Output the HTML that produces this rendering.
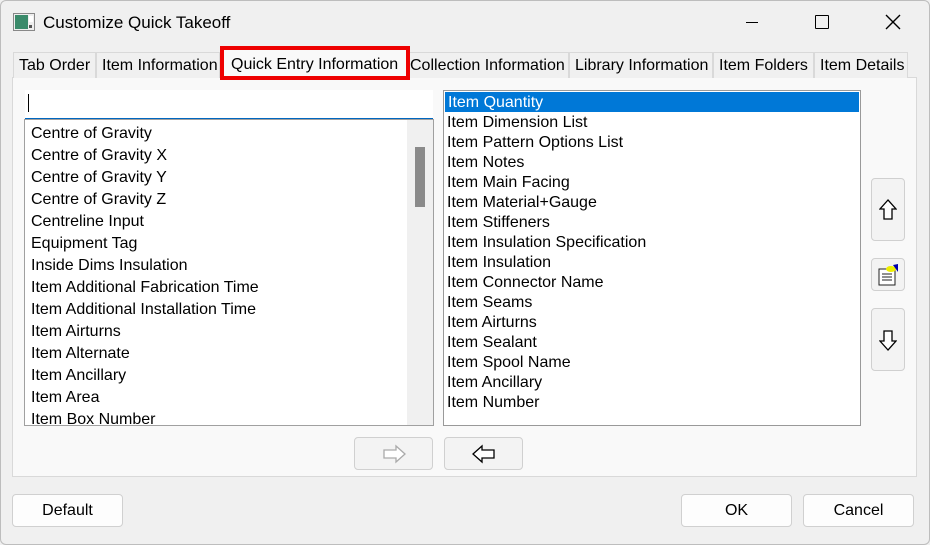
<!DOCTYPE html>
<html><head><style>
*{box-sizing:border-box;margin:0;padding:0}
body{width:930px;height:545px;background:#f0f0f0;font-family:"Liberation Sans",Arial,sans-serif;font-size:15px;color:#000;position:relative;overflow:hidden}
.a{position:absolute}
.tab{position:absolute;top:52px;height:26px;background:#f0f0f0;border:1px solid #d9d9d9;border-bottom:none;padding:4px 0 0 5px;font-size:16px;white-space:nowrap}
.btn{position:absolute;background:#fdfdfd;border:1px solid #d0d0d0;border-radius:4px;text-align:center;font-size:16px}
.row{height:22px;line-height:22px;padding-left:6px;white-space:nowrap;font-size:16px}
.r2{height:20px;line-height:20px;padding-left:3px;white-space:nowrap;font-size:16px}
</style></head><body>
<div class="a" style="left:0;top:0;width:930px;height:545px;border:1px solid #bdbdbd;border-radius:6px"></div>
<svg class="a" style="left:13px;top:13px" width="22" height="18"><rect x="0.5" y="0.5" width="21" height="17" fill="#eee" stroke="#888"/><rect x="2" y="2" width="13" height="14" fill="#3a8a6a"/><rect x="16" y="3" width="4" height="6" fill="#fff"/><rect x="16" y="12" width="3" height="3" fill="#555"/></svg>
<div class="a" style="left:43px;top:13px;font-size:17px">Customize Quick Takeoff</div>
<div class="a" style="left:746px;top:22px;width:12px;height:1px;background:#000"></div>
<div class="a" style="left:815px;top:15px;width:14px;height:14px;border:1.5px solid #000;border-radius:1px"></div>
<svg class="a" style="left:885px;top:14px" width="16" height="16"><path d="M1 1L15 15M15 1L1 15" stroke="#000" stroke-width="1.4"/></svg>
<div class="a" style="left:12px;top:77px;width:905px;height:400px;background:#f9f9f9;border:1px solid #d9d9d9"></div>
<div class="tab" style="left:13px;width:83px">Tab Order</div>
<div class="tab" style="left:96px;width:124px">Item Information</div>
<div class="tab" style="left:404px;width:165px">Collection Information</div>
<div class="tab" style="left:569px;width:144px">Library Information</div>
<div class="tab" style="left:713px;width:101px">Item Folders</div>
<div class="tab" style="left:814px;width:94px">Item Details</div>
<div class="a" style="left:220px;top:46px;width:190px;height:34px;border:4px solid #e00;background:#f9f9f9;padding:6px 0 0 7px;font-size:16px;white-space:nowrap">Quick Entry Information</div>
<div class="a" style="left:25px;top:90px;width:408px;height:30px;background:#fff;border-bottom:2px solid #0067c0"></div>
<div class="a" style="left:28px;top:94px;width:1px;height:18px;background:#000"></div>
<div class="a" style="left:24px;top:119px;width:410px;height:307px;background:#fff;border:1px solid #a0a0a0;overflow:hidden">
<div style="padding-top:3px">
<div class="row">Centre of Gravity</div><div class="row">Centre of Gravity X</div><div class="row">Centre of Gravity Y</div><div class="row">Centre of Gravity Z</div><div class="row">Centreline Input</div><div class="row">Equipment Tag</div><div class="row">Inside Dims Insulation</div><div class="row">Item Additional Fabrication Time</div><div class="row">Item Additional Installation Time</div><div class="row">Item Airturns</div><div class="row">Item Alternate</div><div class="row">Item Ancillary</div><div class="row">Item Area</div><div class="row">Item Box Number</div></div>
<div class="a" style="left:382px;top:0;width:26px;height:306px;background:#f0f0f0"></div>
<div class="a" style="left:390px;top:27px;width:10px;height:60px;background:#8a8a8a"></div>
</div>
<div class="a" style="left:443px;top:90px;width:418px;height:336px;background:#fff;border:1px solid #999">
<div class="r2" style="margin:1px 1px 0 1px;padding-top:1px;background:#0078d7;color:#fff">Item Quantity</div>
<div style="padding-top:1px">
<div class="r2">Item Dimension List</div><div class="r2">Item Pattern Options List</div><div class="r2">Item Notes</div><div class="r2">Item Main Facing</div><div class="r2">Item Material+Gauge</div><div class="r2">Item Stiffeners</div><div class="r2">Item Insulation Specification</div><div class="r2">Item Insulation</div><div class="r2">Item Connector Name</div><div class="r2">Item Seams</div><div class="r2">Item Airturns</div><div class="r2">Item Sealant</div><div class="r2">Item Spool Name</div><div class="r2">Item Ancillary</div><div class="r2">Item Number</div></div>
</div>
<div class="btn" style="left:871px;top:178px;width:34px;height:63px;background:#f3f3f3"><svg style="margin-top:20px" width="18" height="22"><path d="M9 1L1 10H5V20H13V10H17Z" fill="#fff" stroke="#000" stroke-width="1.3"/></svg></div>
<div class="btn" style="left:871px;top:258px;width:34px;height:33px;background:#f3f3f3"><svg style="margin-top:4px" width="24" height="24"><rect x="3" y="6" width="16" height="16" fill="#fff" stroke="#222"/><path d="M6 11h10M6 14h10M6 17h10" stroke="#222"/><ellipse cx="15" cy="6" rx="5" ry="3" fill="#ee0"/><path d="M17 2L22 1V9Z" fill="#00a"/></svg></div>
<div class="btn" style="left:871px;top:308px;width:34px;height:63px;background:#f3f3f3"><svg style="margin-top:20px" width="18" height="22"><path d="M9 21L1 12H5V2H13V12H17Z" fill="#fff" stroke="#000" stroke-width="1.3"/></svg></div>
<div class="btn" style="left:354px;top:437px;width:79px;height:33px;background:#f3f3f3"><svg style="margin-top:6px" width="24" height="20"><path d="M23 10L14 2V6H2V14H14V18Z" fill="#fff" stroke="#aaa" stroke-width="1.3"/></svg></div>
<div class="btn" style="left:444px;top:437px;width:79px;height:33px;background:#f3f3f3"><svg style="margin-top:6px" width="24" height="20"><path d="M1 10L10 2V6H22V14H10V18Z" fill="#fff" stroke="#000" stroke-width="1.3"/></svg></div>
<div class="btn" style="left:12px;top:494px;width:111px;height:33px;line-height:31px">Default</div>
<div class="btn" style="left:681px;top:494px;width:111px;height:33px;line-height:31px">OK</div>
<div class="btn" style="left:803px;top:494px;width:111px;height:33px;line-height:31px">Cancel</div>
</body></html>
